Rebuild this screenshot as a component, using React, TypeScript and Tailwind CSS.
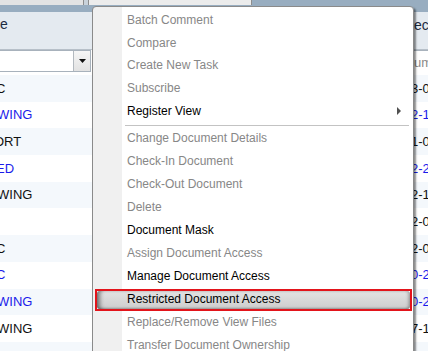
import React from "react";

type Row = { l: string; lc: string; r: string; blue: boolean };

const rows: Row[] = [
  { l: "C", lc: "ml-[-4px]", r: "3-08-1", blue: false },
  { l: "WING", lc: "ml-[-3px]", r: "2-12-0", blue: true },
  { l: "ORT", lc: "ml-[-6px]", r: "1-05-2", blue: false },
  { l: "ED", lc: "ml-[-4px]", r: "2-23-1", blue: true },
  { l: "WING", lc: "ml-[-3px]", r: "2-13-0", blue: false },
  { l: "", lc: "", r: "2-09-1", blue: false },
  { l: "C", lc: "ml-[-4px]", r: "2-01-0", blue: false },
  { l: "C", lc: "ml-[-4px]", r: "0-21-1", blue: true },
  { l: "WING", lc: "ml-[-3px]", r: "0-27-0", blue: true },
  { l: "WING", lc: "ml-[-3px]", r: "7-11-2", blue: false },
  { l: "", lc: "", r: "", blue: false },
];

type Item = { t: string; on: boolean; sub?: boolean; hl?: boolean };

const group1: Item[] = [
  { t: "Batch Comment", on: false },
  { t: "Compare", on: false },
  { t: "Create New Task", on: false },
  { t: "Subscribe", on: false },
  { t: "Register View", on: true, sub: true },
];

const group2: Item[] = [
  { t: "Change Document Details", on: false },
  { t: "Check-In Document", on: false },
  { t: "Check-Out Document", on: false },
  { t: "Delete", on: false },
  { t: "Document Mask", on: true },
  { t: "Assign Document Access", on: false },
  { t: "Manage Document Access", on: true },
  { t: "Restricted Document Access", on: true, hl: true },
  { t: "Replace/Remove View Files", on: false },
  { t: "Transfer Document Ownership", on: false },
];

function MenuItem({ item, h }: { item: Item; h: string }) {
  return (
    <div className={`relative flex items-center ${h}`}>
      {item.hl && (
        <div className="absolute left-[2px] right-[1px] top-[1.25px] h-[22px] border-2 border-[#e3141b]">
          <div className="h-full w-full rounded-[3px] bg-[linear-gradient(to_bottom,#e3e3e3,#cdcdcd)] shadow-[inset_5px_0_4px_-2px_rgba(0,0,0,0.45),inset_-3px_0_3px_-1px_rgba(0,0,0,0.22),inset_0_-1px_2px_rgba(0,0,0,0.2)]" />
        </div>
      )}
      <span
        className={`relative pl-[34px] text-[12px] leading-none whitespace-nowrap ${
          item.on ? "text-[#000000]" : "text-[#878787]"
        }`}
      >
        {item.t}
      </span>
      {item.sub && (
        <svg
          className="absolute right-[12px] top-1/2 -translate-y-1/2"
          width="4"
          height="8"
          viewBox="0 0 4 8"
        >
          <polygon points="0,0 4,4 0,8" fill="#505050" />
        </svg>
      )}
    </div>
  );
}

export default function App() {
  return (
    <div className="relative h-[351px] w-[428px] overflow-hidden bg-white font-['Liberation_Sans',Arial,sans-serif]">
      <div className="flex flex-col">
        {/* top band */}
        <div className="flex h-[12px] bg-[#98adc0]">
          <div className="flex h-[5px] w-[252px]">
            <div className="w-[84px] border-r border-[#8d8d8d] bg-[#e3e3e3]" />
            <div className="w-[4px] bg-[#c9d2da]" />
            <div className="flex-1 border-x border-[#8d8d8d] bg-[#ececec]" />
          </div>
        </div>

        {/* header */}
        <div className="flex h-[38px] border-b border-[#b7c0c9] bg-[#e4eaf0]">
          <div className="w-[91px] pt-[4px] text-[14px] leading-[16px] text-[#1c2b40]">
            e
          </div>
          <div className="flex-1" />
          <div className="w-[19px] overflow-hidden whitespace-nowrap pl-[5px] pt-[5px] text-[14px] leading-[16px] text-[#1c2b40]">
            eco
          </div>
        </div>

        {/* filter row */}
        <div className="flex h-[25px] bg-white">
          <div className="flex h-[22px] w-[91px] border-y border-r border-[#a8b2bc] bg-white">
            <div className="flex-1" />
            <div className="flex w-[17px] items-center justify-center border-l border-[#b3b9bf] bg-[linear-gradient(to_bottom,#f6f6f6,#e2e2e2)]">
              <svg width="7" height="4" viewBox="0 0 7 4">
                <polygon points="0,0 7,0 3.5,4" fill="#111" />
              </svg>
            </div>
          </div>
          <div className="flex-1" />
          <div className="h-[22px] w-[19px] overflow-hidden whitespace-nowrap border-t border-[#a8b2bc] pl-[5px] pt-[4px] text-[13px] leading-[15px] text-[#8a8a8a]">
            um-
          </div>
        </div>

        {/* data rows */}
        {rows.map((r, i) => (
          <div
            key={i}
            className={`flex h-[26.7px] items-center text-[13px] ${
              i % 2 === 0 ? "bg-[#f4f8fc]" : "bg-white"
            } ${r.blue ? "text-[#1b1bea]" : "text-[#111111]"}`}
          >
            <div className="w-[91px] overflow-hidden whitespace-nowrap">
              <span className={`inline-block ${r.lc}`}>{r.l}</span>
            </div>
            <div className="flex-1" />
            <div className="w-[19px] overflow-hidden whitespace-nowrap pl-[2px]">
              {r.r}
            </div>
          </div>
        ))}
      </div>

      {/* context menu overlay */}
      <div className="absolute left-[92px] top-[6px] h-[380px] w-[322px] rounded-[4px] border border-[#8a8a8a] bg-[linear-gradient(to_right,#f0f0f0_0,#f0f0f0_29px,#ffffff_29px)] pt-[1.5px] shadow-[2px_2px_2px_rgba(0,0,0,0.45)]">
        {group1.map((it) => (
          <MenuItem key={it.t} item={it} h="h-[22.75px]" />
        ))}
        <div className="h-[4.5px] pt-[2.5px]">
          <div className="ml-[32px] mr-[4px] h-px bg-[#c3c3c3]" />
        </div>
        {group2.map((it) => (
          <MenuItem key={it.t} item={it} h="h-[23px]" />
        ))}
      </div>
    </div>
  );
}
